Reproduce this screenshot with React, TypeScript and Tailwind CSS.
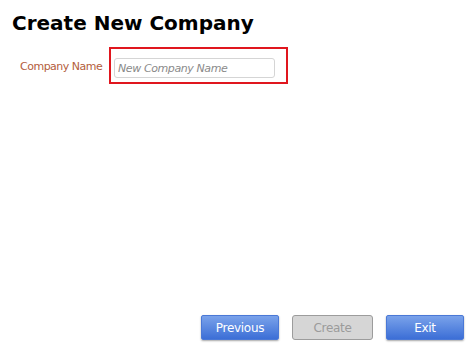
export default function App() {
  return (
    <div className="flex flex-col w-[474px] h-[349px] bg-white font-['Tahoma','DejaVu_Sans',sans-serif] overflow-hidden">
      {/* Heading */}
      <h1 className="pl-[12px] pt-[9px] text-[20px] leading-[28px] font-bold text-black">
        Create New Company
      </h1>

      {/* Company name row */}
      <div className="flex items-center mt-[10px] pl-[20px]">
        <label className="w-[89px] pt-[4px] whitespace-nowrap text-[11px] tracking-[-0.5px] text-[#b35d3c]">
          Company Name
        </label>
        <div className="border-2 border-[#e0161e] w-[179px] h-[37px] flex items-center pl-[3px] pt-[5px]">
          <input
            placeholder="New Company Name"
            className="w-[161px] h-[20px] rounded-[3px] border border-[#d5d5d5] px-[3px] text-[11px] tracking-[-0.4px] italic placeholder:text-[#8a8a8a] outline-none"
          />
        </div>
      </div>

      <div className="flex-1" />

      {/* Buttons */}
      <div className="flex justify-end gap-[13px] pr-[10px] pb-[9px]">
        <button className="w-[78px] h-[25px] rounded-[2px] border border-[#4a78d6] bg-gradient-to-b from-[#7aa2ea] to-[#3c6ed6] text-white text-[12px] tracking-[-0.3px] shadow-[0_1px_2px_rgba(0,0,0,0.35)]">
          Previous
        </button>
        <button className="w-[81px] h-[25px] rounded-[3px] border border-[#9c9c9c] bg-[#d6d6d6] text-[#9b9b9b] text-[12px] tracking-[-0.3px]">
          Create
        </button>
        <button className="w-[78px] h-[25px] rounded-[2px] border border-[#4a78d6] bg-gradient-to-b from-[#7aa2ea] to-[#3c6ed6] text-white text-[12px] tracking-[-0.3px] shadow-[0_1px_2px_rgba(0,0,0,0.35)]">
          Exit
        </button>
      </div>
    </div>
  );
}
